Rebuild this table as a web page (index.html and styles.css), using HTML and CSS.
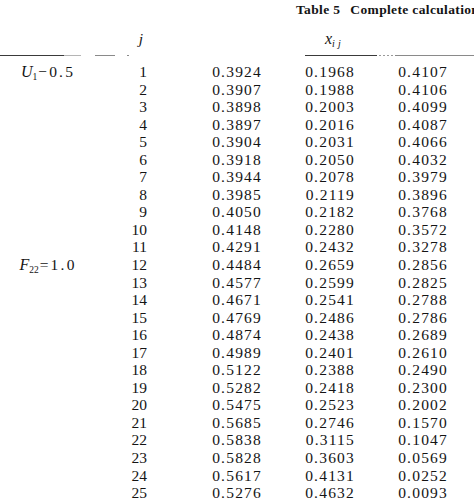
FILE: index.html
```html
<!DOCTYPE html>
<html lang="en">
<head>
<meta charset="utf-8">
<title>Table 5 Complete calculation</title>
<link rel="stylesheet" href="styles.css">
</head>
<body>
<div class="page">
  <div class="caption"><span class="tno">Table 5</span><span class="ttl">Complete calculation</span></div>
  <div class="head">
    <div class="hcell"></div>
    <div class="hcell hj"><i>j</i></div>
    <div class="hcell"></div>
    <div class="hcell hx"><i>x</i><sub><i>i j</i></sub></div>
    <div class="hcell"></div>
  </div>
  <div class="rules">
    <span class="r r-dark r1"></span>
    <span class="r r-fade r2"></span>
    <span class="r r-mid r3"></span>
    <span class="r r-mid r4"></span>
    <span class="r r-dark r5"></span>
    <span class="r r-dot r6"></span>
    <span class="r r-mid r7"></span>
  </div>
  <div class="rows">
    <div class="lbl"><i>U</i><sub>1</sub><span class="num">−0.5</span></div><div class="j">1</div><div class="n">0.3924</div><div class="n">0.1968</div><div class="n">0.4107</div>
    <div class="lbl"></div><div class="j">2</div><div class="n">0.3907</div><div class="n">0.1988</div><div class="n">0.4106</div>
    <div class="lbl"></div><div class="j">3</div><div class="n">0.3898</div><div class="n">0.2003</div><div class="n">0.4099</div>
    <div class="lbl"></div><div class="j">4</div><div class="n">0.3897</div><div class="n">0.2016</div><div class="n">0.4087</div>
    <div class="lbl"></div><div class="j">5</div><div class="n">0.3904</div><div class="n">0.2031</div><div class="n">0.4066</div>
    <div class="lbl"></div><div class="j">6</div><div class="n">0.3918</div><div class="n">0.2050</div><div class="n">0.4032</div>
    <div class="lbl"></div><div class="j">7</div><div class="n">0.3944</div><div class="n">0.2078</div><div class="n">0.3979</div>
    <div class="lbl"></div><div class="j">8</div><div class="n">0.3985</div><div class="n">0.2119</div><div class="n">0.3896</div>
    <div class="lbl"></div><div class="j">9</div><div class="n">0.4050</div><div class="n">0.2182</div><div class="n">0.3768</div>
    <div class="lbl"></div><div class="j">10</div><div class="n">0.4148</div><div class="n">0.2280</div><div class="n">0.3572</div>
    <div class="lbl"></div><div class="j">11</div><div class="n">0.4291</div><div class="n">0.2432</div><div class="n">0.3278</div>
    <div class="lbl"><i>F</i><sub>22</sub><span class="num">=1.0</span></div><div class="j">12</div><div class="n">0.4484</div><div class="n">0.2659</div><div class="n">0.2856</div>
    <div class="lbl"></div><div class="j">13</div><div class="n">0.4577</div><div class="n">0.2599</div><div class="n">0.2825</div>
    <div class="lbl"></div><div class="j">14</div><div class="n">0.4671</div><div class="n">0.2541</div><div class="n">0.2788</div>
    <div class="lbl"></div><div class="j">15</div><div class="n">0.4769</div><div class="n">0.2486</div><div class="n">0.2786</div>
    <div class="lbl"></div><div class="j">16</div><div class="n">0.4874</div><div class="n">0.2438</div><div class="n">0.2689</div>
    <div class="lbl"></div><div class="j">17</div><div class="n">0.4989</div><div class="n">0.2401</div><div class="n">0.2610</div>
    <div class="lbl"></div><div class="j">18</div><div class="n">0.5122</div><div class="n">0.2388</div><div class="n">0.2490</div>
    <div class="lbl"></div><div class="j">19</div><div class="n">0.5282</div><div class="n">0.2418</div><div class="n">0.2300</div>
    <div class="lbl"></div><div class="j">20</div><div class="n">0.5475</div><div class="n">0.2523</div><div class="n">0.2002</div>
    <div class="lbl"></div><div class="j">21</div><div class="n">0.5685</div><div class="n">0.2746</div><div class="n">0.1570</div>
    <div class="lbl"></div><div class="j">22</div><div class="n">0.5838</div><div class="n">0.3115</div><div class="n">0.1047</div>
    <div class="lbl"></div><div class="j">23</div><div class="n">0.5828</div><div class="n">0.3603</div><div class="n">0.0569</div>
    <div class="lbl"></div><div class="j">24</div><div class="n">0.5617</div><div class="n">0.4131</div><div class="n">0.0252</div>
    <div class="lbl"></div><div class="j">25</div><div class="n">0.5276</div><div class="n">0.4632</div><div class="n">0.0093</div>
  </div>
</div>
</body>
</html>
```

FILE: styles.css
```css
html, body {
  margin: 0;
  padding: 0;
  background: #ffffff;
}

body {
  width: 474px;
  height: 502px;
  overflow: hidden;
  font-family: "Liberation Serif", "Times New Roman", serif;
  color: #141414;
}

.page {
  width: 474px;
}

.caption {
  height: 22px;
  box-sizing: border-box;
  padding-top: 1px;
  padding-left: 296px;
  line-height: 18px;
  font-size: 13.5px;
  font-weight: bold;
  letter-spacing: 0.35px;
  white-space: nowrap;
  overflow: hidden;
}

.tno {
  margin-right: 10px;
}

.head,
.rows {
  display: grid;
  grid-template-columns: 96px 51px 115px 93px 93px;
}

.head {
  height: 33px;
  box-sizing: border-box;
  padding-top: 8px;
  font-size: 15.5px;
  line-height: 18px;
}

.hj {
  text-align: right;
  padding-right: 4px;
}

.hx {
  text-align: right;
  padding-right: 14px;
}

.hx i {
  font-size: 16px;
}

.hx sub {
  font-size: 10px;
  letter-spacing: 0.3px;
  vertical-align: -3px;
  line-height: 0;
}

.hx sub i {
  font-size: 10px;
}

.rules {
  display: flex;
  height: 1px;
  margin-bottom: 7px;
}

.r {
  display: block;
  height: 1px;
}

.r-dark { background: #3a3a3a; }
.r-fade { background: #b5b5b5; }
.r-mid { background: #8a8a8a; }
.r-dot { background: repeating-linear-gradient(90deg, #9a9a9a 0 2px, transparent 2px 4px); }

.r1 { width: 64px; }
.r2 { width: 17px; }
.r3 { width: 20px; margin-left: 14px; }
.r4 { width: 2px; margin-left: 12px; }
.r5 { width: 72px; margin-left: 176px; }
.r6 { width: 16px; margin-left: 2px; }
.r7 { flex: 1; }

.rows {
  font-size: 15.5px;
  line-height: 17.55px;
}

.rows > div {
  height: 17.55px;
  white-space: nowrap;
}

.lbl {
  text-align: center;
}

.lbl i {
  font-size: 16px;
}

.lbl sub {
  font-size: 9.5px;
  vertical-align: -3px;
  line-height: 0;
}

.lbl .num {
  letter-spacing: 2.2px;
  margin-left: 1px;
}

.j {
  text-align: right;
}

.n {
  text-align: right;
  letter-spacing: 1.2px;
}
```
